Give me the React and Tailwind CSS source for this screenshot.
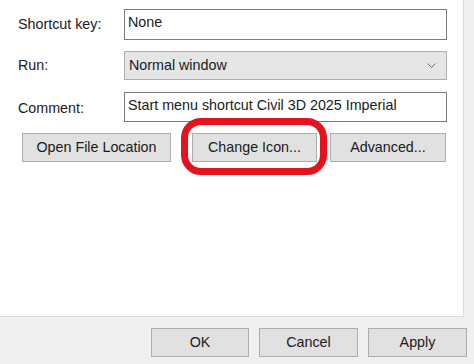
export default function App() {
  const font = { fontFamily: '"Liberation Sans", Arial, sans-serif' }

  return (
    <div className="relative w-[474px] h-[364px] bg-[#f0f0f0] text-[14.3px] text-[#1a1a1a] overflow-hidden" style={font}>
      {/* Tab page */}
      <div className="w-[464px] h-[317px] bg-white border-b border-r border-[#dcdcdc] pt-[9px]">
        <div className="flex items-center h-[31px]">
          <span className="w-[124px] pl-[18px]">Shortcut key:</span>
          <div className="w-[323px] h-[31px] border border-[#7a7a7a] pl-[3px] pt-[1px] leading-[22px]">None</div>
        </div>

        <div className="flex items-center h-[29px] mt-[11px]">
          <span className="w-[124px] pl-[18px]">Run:</span>
          <div className="w-[323px] h-[29px] border border-[#adadad] bg-[#e5e5e5] flex items-center justify-between pl-[4px] pr-[10px]">
            <span>Normal window</span>
            <svg width="9" height="5" viewBox="0 0 9 5" fill="none" stroke="#6b6b6b" strokeWidth="1">
              <path d="M0.5 0.5 L4.5 4.5 L8.5 0.5" />
            </svg>
          </div>
        </div>

        <div className="flex items-center h-[30px] mt-[12px]">
          <span className="w-[124px] pl-[18px] pt-[3px]">Comment:</span>
          <div className="w-[323px] h-[30px] border border-[#7a7a7a] pl-[3px] leading-[24px]">
            Start menu shortcut Civil 3D 2025 Imperial
          </div>
        </div>

        <div className="flex items-center mt-[11px] pl-[22px]">
          <button className="w-[149px] h-[29px] bg-[#e1e1e1] border border-[#adadad]">Open File Location</button>
          <button className="w-[125px] h-[29px] bg-[#e1e1e1] border border-[#adadad] ml-[21px]">Change Icon...</button>
          <button className="w-[116px] h-[29px] bg-[#e1e1e1] border border-[#adadad] ml-[13px]">Advanced...</button>
        </div>
      </div>

      {/* Dialog buttons */}
      <div className="flex justify-end gap-[10px] pr-[7px] mt-[11px]">
        <button className="w-[98px] h-[29px] bg-[#e1e1e1] border border-[#adadad]">OK</button>
        <button className="w-[99px] h-[29px] bg-[#e1e1e1] border border-[#adadad]">Cancel</button>
        <button className="w-[99px] h-[29px] bg-[#e1e1e1] border border-[#adadad]">Apply</button>
      </div>

      {/* Red highlight */}
      <div className="absolute left-[181px] top-[118px] w-[146px] h-[57px] border-[7px] border-[#e3131f] rounded-[20px]" />
    </div>
  )
}
